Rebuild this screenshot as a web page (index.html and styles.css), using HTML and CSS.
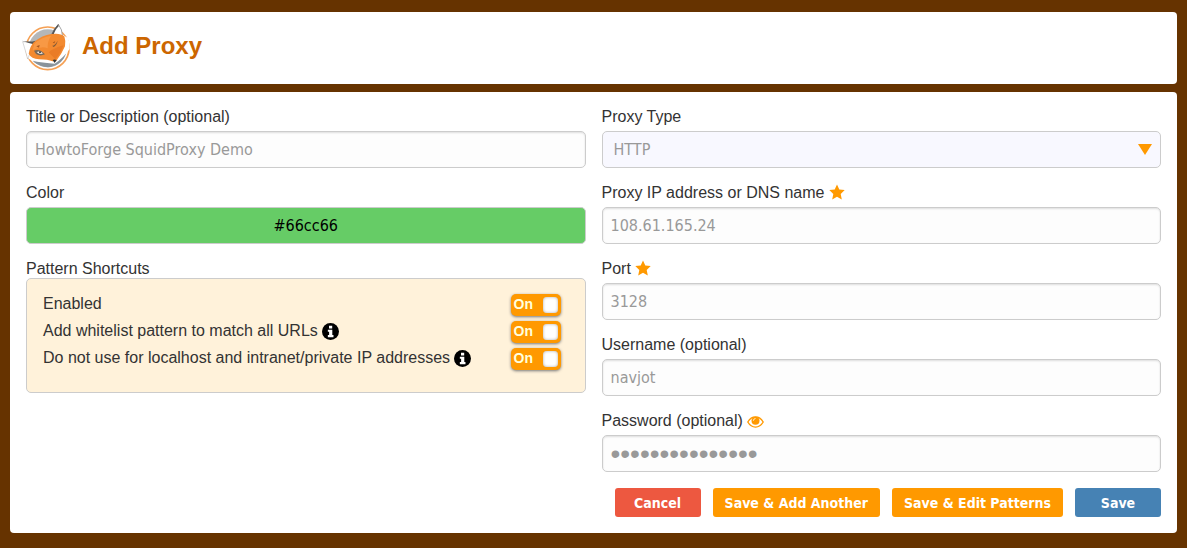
FILE: index.html
```html
<!DOCTYPE html>
<html lang="en">
<head>
<meta charset="utf-8">
<title>Add Proxy</title>
<link rel="stylesheet" href="styles.css">
</head>
<body>
<header class="card header">
  <svg class="logo" viewBox="63 69 150 144" aria-hidden="true">
    <circle cx="143" cy="145" r="64" fill="#fff" stroke="#f5a054" stroke-width="5"/>
    <circle cx="143" cy="145" r="57" fill="#b4b7b9"/>
    <path d="M98 184Q124 204 151 201Q188 193 199 158L165 186Z" fill="#8a939a"/>
    <path d="M92 138Q76 160 84 175Q100 188 164 191Q188 176 209 147Q211 130 204 114L188 104L160 150Z" fill="#fff"/>
    <path d="M68 125Q87 128 104 124L94 150L83 177Q76 151 68 125Z" fill="#fff" stroke="#888" stroke-width="1"/>
    <path d="M66 122Q86 127 107 122L101 133Q86 129 66 122Z" fill="#555"/>
    <path d="M153 107Q161 87 175 73Q187 87 188 111Z" fill="#fff" stroke="#777" stroke-width="2"/>
    <path d="M153 106Q160 87 175 72L176 79Q164 90 161 106Z" fill="#555"/>
    <path d="M101 127Q127 105 154 102Q181 98 193 109Q198 124 195 139Q186 160 168 184L157 184Q145 178 117 178Q94 176 86 161Q90 139 101 127Z" fill="#f38a30"/>
    <path d="M103 131Q126 110 153 107Q141 127 143 145Q125 137 98 151Z" fill="#f89945"/>
    <path d="M146 157Q160 145 190 136Q185 155 166 178Z" fill="#ea7c26"/>
    <path d="M102 152Q119 145 135 163Q121 170 108 162Z" fill="#77695b"/>
    <path d="M110 156Q120 151 129 160Q119 165 110 156Z" fill="#f6eee4"/>
    <circle cx="120" cy="157" r="3" fill="#444"/>
    <path d="M157 137Q165 137 173 122Q170 137 160 141Z" fill="#7d5a3b"/>
    <path d="M109 139L119 135L117 143ZM158 128L166 123L163 130Z" fill="#a7561c"/>
    <path d="M158 180Q163 177 170 180L164 189Z" fill="#333"/>
  </svg>
  <h1 class="title">Add Proxy</h1>
</header>

<form class="card form">
  <div class="column">
    <div class="field">
      <label class="label" for="name">Title or Description (optional)</label>
      <input class="control" id="name" type="text" value="HowtoForge SquidProxy Demo">
    </div>
    <div class="field">
      <label class="label" for="color">Color</label>
      <input class="control color" id="color" type="text" value="#66cc66">
    </div>
    <fieldset class="shortcuts">
      <legend class="legend">Pattern Shortcuts</legend>
      <div class="options">
        <div class="option">
          <label for="enabled">Enabled</label>
          <span class="switch"><input class="check" id="enabled" type="checkbox" checked><span class="state">On</span><span class="knob"></span></span>
        </div>
        <div class="option">
          <label for="whitelist">Add whitelist pattern to match all URLs
            <svg class="info" viewBox="0 0 16 16" aria-hidden="true"><circle cx="8" cy="8" r="8"/><path d="M6.6 2.6h3v2.5h-3zM5.5 6.4h4.2v5h1.1v1.9H5.5v-1.9h1.2V8.2H5.5z" fill="#fff"/></svg></label>
          <span class="switch"><input class="check" id="whitelist" type="checkbox" checked><span class="state">On</span><span class="knob"></span></span>
        </div>
        <div class="option">
          <label for="local">Do not use for localhost and intranet/private IP addresses
            <svg class="info" viewBox="0 0 16 16" aria-hidden="true"><circle cx="8" cy="8" r="8"/><path d="M6.6 2.6h3v2.5h-3zM5.5 6.4h4.2v5h1.1v1.9H5.5v-1.9h1.2V8.2H5.5z" fill="#fff"/></svg></label>
          <span class="switch"><input class="check" id="local" type="checkbox" checked><span class="state">On</span><span class="knob"></span></span>
        </div>
      </div>
    </fieldset>
  </div>

  <div class="column">
    <div class="field">
      <label class="label" for="type">Proxy Type</label>
      <div class="picker">
        <select class="control select" id="type"><option>HTTP</option></select>
        <svg class="arrow" viewBox="0 0 14 11" aria-hidden="true"><path d="M0 0h14L7 11z"/></svg>
      </div>
    </div>
    <div class="field">
      <label class="label" for="address">Proxy IP address or DNS name
        <svg class="star" viewBox="0 0 16 16" aria-hidden="true"><path d="M8 .5l2.3 5 5.4.6-4 3.8 1.1 5.6L8 12.8l-4.8 2.7 1.1-5.6-4-3.8 5.4-.6z"/></svg></label>
      <input class="control" id="address" type="text" value="108.61.165.24">
    </div>
    <div class="field">
      <label class="label" for="port">Port
        <svg class="star" viewBox="0 0 16 16" aria-hidden="true"><path d="M8 .5l2.3 5 5.4.6-4 3.8 1.1 5.6L8 12.8l-4.8 2.7 1.1-5.6-4-3.8 5.4-.6z"/></svg></label>
      <input class="control" id="port" type="text" value="3128">
    </div>
    <div class="field">
      <label class="label" for="user">Username (optional)</label>
      <input class="control" id="user" type="text" value="navjot">
    </div>
    <div class="field">
      <label class="label" for="password">Password (optional)
        <svg class="eye" viewBox="0 0 17 12" aria-hidden="true"><path d="M.8 6Q3.8.9 8.5.9T16.200 6Q13.200 11.100 8.500 11.100T.8 6Z" fill="none" stroke="#f90" stroke-width="1.400"/><circle cx="8.500" cy="4.800" r="4" fill="#f90"/><path d="M6.300 4.800Q6.400 2.700 8.500 2.500" fill="none" stroke="#fff" stroke-width=".8"/></svg></label>
      <input class="control password" id="password" type="password" value="proxypassword15">
    </div>
    <div class="actions">
      <button class="button cancel" type="button">Cancel</button>
      <button class="button" type="button">Save &amp; Add Another</button>
      <button class="button" type="button">Save &amp; Edit Patterns</button>
      <button class="button save" type="button">Save</button>
    </div>
  </div>
</form>
</body>
</html>
```

FILE: styles.css
```css
* {
  box-sizing: border-box;
}

body {
  margin: 0;
  padding: 12px 10px;
  display: flex;
  flex-direction: column;
  gap: 8px;
  background: #630;
  color: #333;
  font: 16px/18px "Liberation Sans", Arial, sans-serif;
}

.card {
  background: #fff;
  border-radius: 4px;
}

.header {
  display: flex;
  align-items: center;
  gap: 11px;
  padding: 11px 11px 13px;
}

.logo {
  width: 50px;
  height: 48px;
}

.title {
  margin: 0;
  padding-bottom: 2px;
  color: #c60;
  font-size: 24px;
  line-height: 28px;
}

.form {
  display: grid;
  grid-template-columns: 1fr 1fr;
  gap: 16px;
  padding: 16px;
}

.column {
  display: flex;
  flex-direction: column;
  gap: 16px;
  min-width: 0;
}

.field {
  display: flex;
  flex-direction: column;
  gap: 5px;
}

.label {
  height: 18px;
}

.control {
  width: 100%;
  height: 37px;
  margin: 0;
  padding: 0 8px;
  border: 1px solid #ccc;
  border-radius: 5px;
  background: #fdfdfd;
  box-shadow: inset 0 1px 2px #ddd;
  color: #999;
  font: 16px "DejaVu Sans Condensed", Tahoma, sans-serif;
}

.color {
  background: #6c6;
  box-shadow: none;
  color: #000;
  text-align: center;
}

.password {
  font: 28px "Liberation Sans", Arial, sans-serif;
}

.picker {
  display: grid;
  align-items: center;
}

.picker > * {
  grid-area: 1 / 1;
}

.select {
  appearance: none;
  padding: 0 11px;
  background: #f8f8ff;
  box-shadow: none;
}

.arrow {
  justify-self: end;
  width: 14px;
  height: 11px;
  margin-right: 9px;
  fill: #f90;
  pointer-events: none;
}

.star {
  width: 16px;
  height: 16px;
  vertical-align: -2px;
  fill: #f90;
}

.eye {
  width: 17px;
  height: 12px;
  vertical-align: -2px;
}

.shortcuts {
  margin: 0;
  padding: 0;
  border: 0;
}

.legend {
  padding: 0;
}

.options {
  display: flex;
  flex-direction: column;
  gap: 5px;
  padding: 15px 24px 22px 16px;
  border: 1px solid #ccc;
  border-radius: 5px;
  background: #fff2da;
}

.option {
  display: flex;
  align-items: center;
  justify-content: space-between;
}

.option > label {
  display: flex;
  align-items: center;
  gap: 4px;
  padding-bottom: 2px;
}

.info {
  width: 17px;
  height: 17px;
}

.switch {
  position: relative;
  display: flex;
  align-items: center;
  justify-content: space-between;
  width: 50px;
  height: 22px;
  padding: 0 3px;
  border-radius: 5px;
  background: #f90;
  box-shadow: 0 1px 3px #777;
}

.check {
  position: absolute;
  inset: 0;
  width: 100%;
  height: 100%;
  margin: 0;
  opacity: 0;
}

.state {
  padding-bottom: 3px;
  color: #ffd;
  font-size: 14px;
  font-weight: bold;
}

.knob {
  width: 15px;
  height: 16px;
  border-radius: 4px;
  background: #fff;
  box-shadow: inset 0 0 3px #aaa;
}

.actions {
  display: flex;
  justify-content: flex-end;
  gap: 12px;
}

.button {
  min-width: 86px;
  height: 29px;
  padding: 0 12px;
  border: 0;
  border-radius: 3px;
  background: #f90;
  color: #fff;
  font: bold 14px "DejaVu Sans Condensed", Tahoma, sans-serif;
  white-space: nowrap;
}

.cancel {
  background: #ed5840;
}

.save {
  background: #4682b4;
}
```
